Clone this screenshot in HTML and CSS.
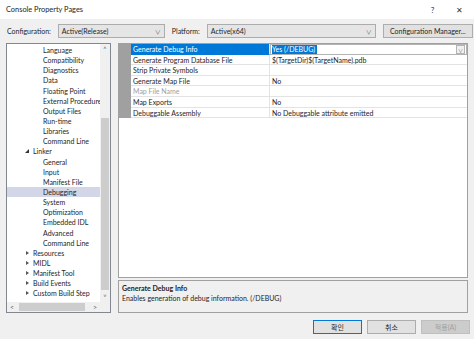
FILE: index.html
```html
<!DOCTYPE html>
<html lang="en">
<head>
    <meta charset="UTF-8">
    <title>Console Property Pages</title>
    <link rel="stylesheet" href="styles.css">
</head>
<body>
    <div class="dialog">
        <div class="titlebar">
            <span class="title">Console Property Pages</span>
            <span class="tb-btn">?</span>
            <span class="tb-btn tb-close">&#x2715;</span>
        </div>

        <div class="toolbar">
            <span class="label">Configuration:</span>
            <div class="select sel-config"><span>Active(Release)</span><span class="chev">&#x2228;</span></div>
            <span class="label label-plat">Platform:</span>
            <div class="select sel-plat"><span>Active(x64)</span><span class="chev">&#x2228;</span></div>
            <button class="btn btn-manager">Configuration Manager...</button>
        </div>

        <div class="main">
            <div class="tree">
                <div class="tree-body">
                    <ul class="tree-list">
                        <li class="lvl2">Language</li>
                        <li class="lvl2">Compatibility</li>
                        <li class="lvl2">Diagnostics</li>
                        <li class="lvl2">Data</li>
                        <li class="lvl2">Floating Point</li>
                        <li class="lvl2">External Procedures</li>
                        <li class="lvl2">Output Files</li>
                        <li class="lvl2">Run-time</li>
                        <li class="lvl2">Libraries</li>
                        <li class="lvl2">Command Line</li>
                        <li class="lvl1"><span class="tw open"></span>Linker</li>
                        <li class="lvl2">General</li>
                        <li class="lvl2">Input</li>
                        <li class="lvl2">Manifest File</li>
                        <li class="lvl2 current">Debugging</li>
                        <li class="lvl2">System</li>
                        <li class="lvl2">Optimization</li>
                        <li class="lvl2">Embedded IDL</li>
                        <li class="lvl2">Advanced</li>
                        <li class="lvl2">Command Line</li>
                        <li class="lvl1"><span class="tw"></span>Resources</li>
                        <li class="lvl1"><span class="tw"></span>MIDL</li>
                        <li class="lvl1"><span class="tw"></span>Manifest Tool</li>
                        <li class="lvl1"><span class="tw"></span>Build Events</li>
                        <li class="lvl1"><span class="tw"></span>Custom Build Step</li>
                    </ul>
                    <div class="vscroll">
                        <span class="arrow">&#x02C4;</span>
                        <div class="vtrack"><div class="vthumb"></div></div>
                        <span class="arrow">&#x02C5;</span>
                    </div>
                </div>
                <div class="hscroll">
                    <span class="arrow">&lt;</span>
                    <div class="htrack"><div class="hthumb"></div></div>
                    <span class="arrow">&gt;</span>
                    <span class="corner"></span>
                </div>
            </div>

            <div class="right">
                <div class="grid">
                    <div class="prow selected">
                        <div class="pgut"></div>
                        <div class="pname">Generate Debug Info</div>
                        <div class="pval edit"><span class="hl">Yes (/DEBUG)</span><span class="drop">&#x2228;</span></div>
                    </div>
                    <div class="prow">
                        <div class="pgut"></div>
                        <div class="pname">Generate Program Database File</div>
                        <div class="pval">$(TargetDir)$(TargetName).pdb</div>
                    </div>
                    <div class="prow">
                        <div class="pgut"></div>
                        <div class="pname">Strip Private Symbols</div>
                        <div class="pval"></div>
                    </div>
                    <div class="prow">
                        <div class="pgut"></div>
                        <div class="pname">Generate Map File</div>
                        <div class="pval">No</div>
                    </div>
                    <div class="prow">
                        <div class="pgut"></div>
                        <div class="pname disabled">Map File Name</div>
                        <div class="pval"></div>
                    </div>
                    <div class="prow">
                        <div class="pgut"></div>
                        <div class="pname">Map Exports</div>
                        <div class="pval">No</div>
                    </div>
                    <div class="prow">
                        <div class="pgut"></div>
                        <div class="pname">Debuggable Assembly</div>
                        <div class="pval">No Debuggable attribute emitted</div>
                    </div>
                </div>
                <div class="desc">
                    <div class="desc-title">Generate Debug Info</div>
                    <div class="desc-text">Enables generation of debug information. (/DEBUG)</div>
                </div>
            </div>
        </div>

        <div class="footer">
            <button class="btn btn-ok">확인</button>
            <button class="btn">취소</button>
            <button class="btn btn-disabled">적용(A)</button>
        </div>
    </div>
</body>
</html>
```

FILE: styles.css
```css
* {
    margin: 0;
    padding: 0;
    box-sizing: border-box;
}

body {
    font-family: Lato, "Noto Sans CJK KR", sans-serif;
    font-size: 7px;
    color: #1e1e1e;
    background: #f0f0f0;
    width: 474px;
    height: 339px;
    overflow: hidden;
}

.dialog {
    display: flex;
    flex-direction: column;
    height: 339px;
}

/* title bar */
.titlebar {
    height: 19px;
    background: #ffffff;
    display: flex;
    align-items: center;
    padding-left: 6px;
}

.title {
    flex: 1;
    font-size: 7.4px;
}

.tb-btn {
    width: 27px;
    text-align: center;
    font-size: 8px;
    color: #333;
}

.tb-close {
    margin-right: 1px;
}

/* configuration bar */
.toolbar {
    height: 24px;
    display: flex;
    align-items: center;
    padding-left: 7px;
}

.label-plat {
    margin-left: 7px;
}

.select {
    height: 14px;
    border: 1px solid #acacac;
    background: #e5e5e5;
    display: flex;
    align-items: center;
    justify-content: space-between;
    padding: 0 3px 0 3px;
}

.sel-config {
    width: 107px;
    margin-left: 7px;
}

.sel-plat {
    width: 169px;
    margin-left: 7px;
}

.chev {
    font-size: 6px;
    color: #707070;
}

.btn {
    font-family: Lato, "Noto Sans CJK KR", sans-serif;
    font-size: 7px;
    color: #1e1e1e;
    height: 14px;
    width: 49px;
    border: 1px solid #adadad;
    background: #e1e1e1;
}

.btn-manager {
    width: 90px;
    margin-left: 7px;
}

/* main area */
.main {
    height: 270px;
    display: flex;
    gap: 7px;
    padding-left: 6px;
}

.tree {
    width: 105px;
    border: 1px solid #828790;
    background: #ffffff;
    display: flex;
    flex-direction: column;
}

.tree-body {
    flex: 1;
    display: flex;
    overflow: hidden;
}

.tree-list {
    list-style: none;
    flex: 1;
    overflow: hidden;
    white-space: nowrap;
    padding-top: 1px;
}

.tree-list li {
    height: 10.15px;
    line-height: 10.15px;
    display: flex;
    align-items: center;
}

.lvl1 {
    padding-left: 17px;
}

.lvl2 {
    padding-left: 36px;
}

.current {
    background: #d3d6e6;
}

.tw {
    width: 9px;
    height: 10px;
    position: relative;
    flex: none;
}

.tw::before {
    content: "";
    position: absolute;
    left: 2px;
    top: 3px;
    border-left: 3px solid #555;
    border-top: 2.5px solid transparent;
    border-bottom: 2.5px solid transparent;
}

.tw.open::before {
    left: 1px;
    top: 3px;
    border: none;
    width: 0;
    height: 0;
    border-right: 4px solid #333;
    border-top: 4px solid transparent;
}

.vscroll {
    width: 10px;
    background: #f0f0f0;
    display: flex;
    flex-direction: column;
    align-items: center;
}

.arrow {
    height: 10px;
    line-height: 10px;
    font-size: 7px;
    color: #606060;
    text-align: center;
    width: 10px;
}

.vtrack {
    flex: 1;
    width: 10px;
    display: flex;
    flex-direction: column;
    padding-top: 64px;
    padding-bottom: 2px;
}

.vthumb {
    flex: 1;
    margin: 0 1px;
    background: #cdcdcd;
}

.hscroll {
    height: 10px;
    background: #f0f0f0;
    display: flex;
    align-items: center;
}

.htrack {
    flex: 1;
    height: 10px;
    display: flex;
    align-items: center;
    padding: 0 5px 0 2px;
}

.hthumb {
    flex: 1;
    height: 8px;
    background: #cdcdcd;
}

.corner {
    width: 10px;
    height: 10px;
    background: #f0f0f0;
}

/* property grid */
.right {
    width: 350px;
    display: flex;
    flex-direction: column;
    gap: 2px;
}

.grid {
    height: 235px;
    border: 1px solid #a0a0a0;
    background: #ffffff;
}

.prow {
    height: 10.6px;
    display: flex;
}

.pgut {
    width: 12px;
    background: #a0a0a0;
}

.pname {
    width: 139px;
    padding-left: 2px;
    line-height: 10px;
    border-right: 1px solid #e3e3e3;
    border-bottom: 1px solid #e3e3e3;
    white-space: nowrap;
    overflow: hidden;
}

.pval {
    flex: 1;
    padding-left: 2px;
    line-height: 10px;
    border-bottom: 1px solid #e3e3e3;
    white-space: nowrap;
    overflow: hidden;
}

.selected .pname {
    background: #0078d7;
    color: #ffffff;
    border-bottom-color: #0078d7;
}

.edit {
    display: flex;
    align-items: center;
    border: 1px solid #b4b4b4;
    padding-left: 1px;
}

.hl {
    background: #0078d7;
    color: #ffffff;
    line-height: 9px;
    padding-right: 2px;
}

.drop {
    margin-left: auto;
    width: 9px;
    height: 9px;
    border: 1px solid #b4b4b4;
    background: #f0f0f0;
    font-size: 5px;
    line-height: 8px;
    text-align: center;
    color: #707070;
    margin-right: 1px;
}

.disabled {
    color: #a0a0a0;
}

.desc {
    flex: 1;
    border: 1px solid #a0a0a0;
    background: #f0f0f0;
    padding: 3px 3px;
    line-height: 9.5px;
}

.desc-title {
    font-weight: bold;
}

/* dialog buttons */
.footer {
    flex: 1;
    display: flex;
    justify-content: flex-end;
    align-items: flex-start;
    padding-top: 7px;
    padding-right: 4px;
    gap: 5px;
}

.btn-ok {
    border: 1px solid #0078d7;
}

.btn-disabled {
    color: #a0a0a0;
    background: #cccccc;
    border-color: #bfbfbf;
}
```
